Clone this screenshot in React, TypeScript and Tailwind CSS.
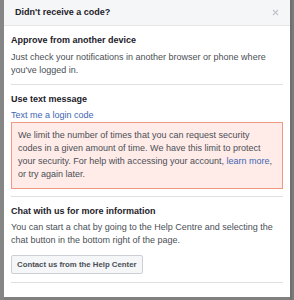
import { X } from "lucide-react"

function Section({
  title,
  children,
  last = false
}: {
  title: string
  children: React.ReactNode
  last?: boolean
}) {
  return (
    <div className={"pt-[8px] pb-[7px] " + (last ? "" : "border-b border-[#dddfe2]")}>
      <div className="text-[9px] leading-[13px] font-bold text-[#1d2129]">{title}</div>
      {children}
    </div>
  )
}

export default function App() {
  return (
    <div
      className="flex w-[294px] h-[300px] bg-[#808080] overflow-hidden"
      style={{ fontFamily: '"Liberation Sans", Arial, sans-serif' }}>
      {/* page behind the overlay */}
      <div className="w-[4px] shrink-0 bg-[#858585]" />

      <div className="w-[286px] h-[297px] shrink-0 bg-white flex flex-col">
        <div className="h-[26px] shrink-0 flex items-center justify-between pl-[11px] pr-[10px] bg-[#f5f6f7] border-b border-[#e5e5e5]">
          <span className="text-[9px] font-bold text-[#1d2129]">Didn't receive a code?</span>
          <X size={9} strokeWidth={3} className="text-[#bec3c9]" />
        </div>

        <div className="px-[7px]">
          <Section title="Approve from another device">
            <p className="mt-[4px] text-[9px] leading-[13px] text-[#4b4f56]">
              Just check your notifications in another browser or phone where you've logged in.
            </p>
          </Section>

          <Section title="Use text message">
            <a className="block mt-[3px] text-[9px] leading-[13px] text-[#4267b2]">Text me a login code</a>
            <div className="pt-[6px] pb-[7px] px-[6px] bg-[#ffebe8] border border-[#ef9a80] text-[9px] leading-[13px] text-[#4b4f56]">
              We limit the number of times that you can request security
              <br />
              codes in a given amount of time. We have this limit to protect
              <br />
              your security. For help with accessing your account,{" "}
              <span className="text-[#4267b2]">learn more</span>,
              <br />
              or try again later.
            </div>
          </Section>

          <Section title="Chat with us for more information">
            <p className="mt-[3px] text-[9px] leading-[13px] text-[#4b4f56]">
              You can start a chat by going to the Help Centre and selecting the chat button in the bottom
              right of the page.
            </p>
            <button className="mt-[8px] mb-[1px] h-[19px] px-[5px] bg-[#f5f6f7] border border-[#ccd0d5] rounded-[2px] text-[7.8px] font-bold text-[#4b4f56]">
              Contact us from the Help Center
            </button>
          </Section>
        </div>
      </div>

      <div className="w-[4px] shrink-0 bg-[#7b7b7b] flex">
        <div className="w-[2px] bg-[#6f6f6f]" />
      </div>
    </div>
  )
}
